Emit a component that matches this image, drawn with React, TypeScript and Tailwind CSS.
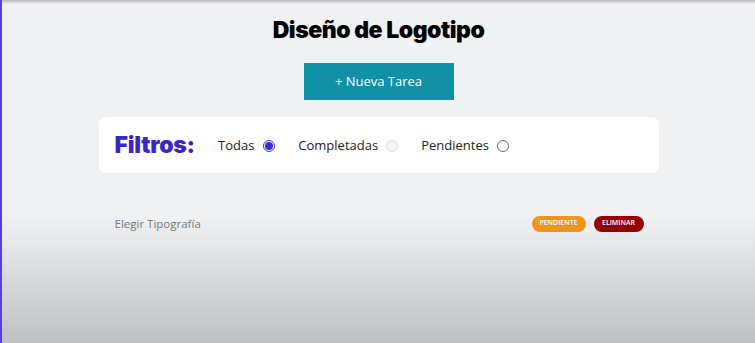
import React from "react";

function Radio({ state }: { state: "checked" | "light" | "empty" }) {
  if (state === "checked") {
    return (
      <span className="inline-flex w-[12px] h-[12px] rounded-full border border-[#4338ca] items-center justify-center bg-white">
        <span className="w-[8px] h-[8px] rounded-full bg-[#3b2fd9]" />
      </span>
    );
  }
  if (state === "light") {
    return <span className="inline-block w-[12px] h-[12px] rounded-full border border-[#d8d8d8] bg-[#f4f4f4]" />;
  }
  return <span className="inline-block w-[12px] h-[12px] rounded-full border border-[#6b6b6b] bg-white" />;
}

export default function App() {
  return (
    <div className="relative w-[755px] h-[343px] overflow-hidden bg-[linear-gradient(to_bottom,#f0f1f3_0%,#f0f1f3_63%,#bec0c3_100%)] border-l-2 border-[#5b3fd6]" style={{ fontFamily: '"Open Sans", sans-serif' }}>
      <div className="absolute top-0 left-0 right-0 h-[4px] bg-[linear-gradient(to_bottom,#b9b9bb,#f0f1f3)]" />
      <div className="flex flex-col items-center pt-[14px]">
        <h1 className="text-[23px] leading-[32px] font-black text-black tracking-[-0.02em]" style={{ fontFamily: "Inter, sans-serif" }}>
          Diseño de Logotipo
        </h1>
        <button className="mt-[17px] w-[150px] h-[37px] bg-[#1190a6] text-white text-[13px] flex items-center justify-center">
          + Nueva Tarea
        </button>
        <div className="mt-[17px] w-[560px] h-[56px] bg-white rounded-[7px] flex items-center pl-[16px] pt-[2px]">
          <span className="text-[23px] font-black text-[#3a25c9] tracking-[-0.01em] mr-[23px] -mt-[2px]" style={{ fontFamily: "Inter, sans-serif" }}>
            Filtros:
          </span>
          <div className="flex items-center gap-[9px] text-[13px] text-[#222]">
            <span>Todas</span>
            <Radio state="checked" />
          </div>
          <div className="flex items-center gap-[8px] text-[13px] text-[#222] ml-[23px]">
            <span>Completadas</span>
            <Radio state="light" />
          </div>
          <div className="flex items-center gap-[8px] text-[13px] text-[#222] ml-[23px]">
            <span>Pendientes</span>
            <Radio state="empty" />
          </div>
        </div>
        <div className="mt-[42px] w-[560px] flex items-center justify-between pl-[16px] pr-[15px]">
          <span className="text-[11.5px] text-[#74787e]">Elegir Tipografía</span>
          <div className="flex items-center gap-[8px]">
            <span className="h-[16px] w-[54px] rounded-full bg-[#f0951c] text-white text-[7px] font-semibold flex items-center justify-center">PENDIENTE</span>
            <span className="h-[16px] w-[50px] rounded-full bg-[#980000] text-white text-[7px] font-semibold flex items-center justify-center">ELIMINAR</span>
          </div>
        </div>
      </div>
    </div>
  );
}
